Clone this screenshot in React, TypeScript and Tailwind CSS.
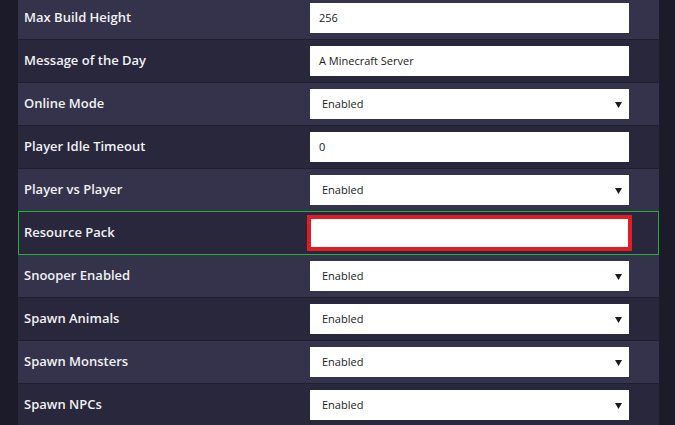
import React from 'react';

type Setting = {
  label: string;
  kind: 'text' | 'select';
  value: string;
  invalid?: boolean;
};

const settings: Setting[] = [
  { label: 'Max Build Height', kind: 'text', value: '256' },
  { label: 'Message of the Day', kind: 'text', value: 'A Minecraft Server' },
  { label: 'Online Mode', kind: 'select', value: 'Enabled' },
  { label: 'Player Idle Timeout', kind: 'text', value: '0' },
  { label: 'Player vs Player', kind: 'select', value: 'Enabled' },
  { label: 'Resource Pack', kind: 'text', value: '', invalid: true },
  { label: 'Snooper Enabled', kind: 'select', value: 'Enabled' },
  { label: 'Spawn Animals', kind: 'select', value: 'Enabled' },
  { label: 'Spawn Monsters', kind: 'select', value: 'Enabled' },
  { label: 'Spawn NPCs', kind: 'select', value: 'Enabled' },
];

const font = { fontFamily: '"Open Sans", "Noto Sans", sans-serif' };

const Field: React.FC<{ setting: Setting }> = ({ setting }) => {
  if (setting.kind === 'select') {
    return (
      <div className="flex h-[30px] w-[319px] items-center justify-between bg-white pl-[12px] pr-[7px] text-[11px] text-[#222]">
        <span>{setting.value}</span>
        <svg width="7" height="6" viewBox="0 0 7 6" className="mt-px">
          <path d="M0 0h7L3.5 6z" fill="#1a1a22" />
        </svg>
      </div>
    );
  }
  return (
    <div
      className={`flex h-[30px] w-[319px] items-center bg-white pl-[9px] text-[11px] text-[#222] ${
        setting.invalid ? 'border border-[#e31b23] ring-[3px] ring-[#e31b23]' : ''
      }`}
    >
      {setting.value}
    </div>
  );
};

export default function App() {
  return (
    <div className="flex h-[425px] w-[675px] overflow-hidden bg-[#1c1b29]" style={font}>
      <div className="ml-[18px] w-[641px] -mt-[3px]">
        {settings.map((s, i) => {
          const bg = i % 2 === 0 ? 'bg-[#34334b]' : 'bg-[#28273c]';
          return (
            <div
              key={s.label}
              className={
                s.invalid
                  ? `relative z-10 -mt-px flex h-[44px] items-center border border-[#22b03c] ${bg} pl-[5px]`
                  : `flex h-[43px] items-center border-b border-[#1f1e2e] ${bg} pl-[6px]`
              }
            >
              <div className="w-[286px] text-[13px] font-semibold text-[#f1f1f5]">{s.label}</div>
              <Field setting={s} />
            </div>
          );
        })}
      </div>
    </div>
  );
}
